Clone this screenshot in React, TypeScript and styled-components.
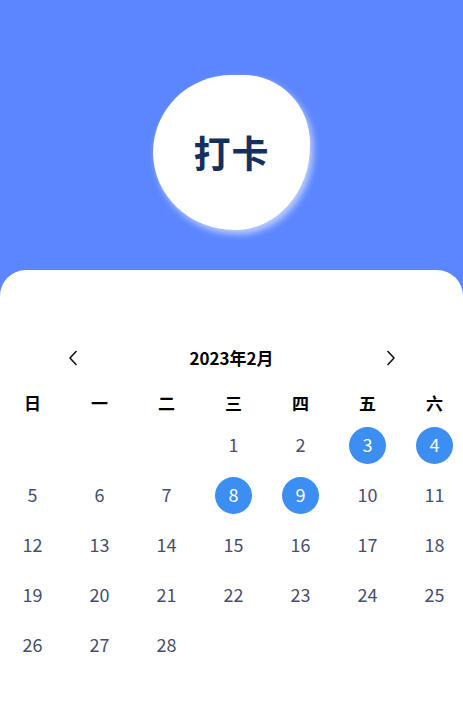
import React from "react";
import styled, { createGlobalStyle } from "styled-components";

const Global = createGlobalStyle`
  html, body { margin: 0; padding: 0; background: #ffffff; }
  body { font-family: "Noto Sans CJK SC", "Noto Sans", sans-serif; }
  * { box-sizing: border-box; }
`;

const Page = styled.div`
  width: 463px;
  min-height: 719px;
  background: #5b86ff;
  display: flex;
  flex-direction: column;
  overflow: hidden;
`;

const Header = styled.header`
  height: 270px;
  padding-top: 34px;
  display: flex;
  align-items: center;
  justify-content: center;
`;

const Blob = styled.button`
  width: 157px;
  height: 155px;
  border: none;
  background: #ffffff;
  border-radius: 50% 42% 48% 52% / 50% 44% 54% 50%;
  box-shadow: 3px 4px 7px rgba(210, 222, 255, 0.85);
  display: flex;
  align-items: center;
  justify-content: center;
  font-family: "Noto Sans CJK SC", sans-serif;
  font-size: 37px;
  font-weight: 700;
  color: #14305e;
  letter-spacing: 1px;
  padding: 0;
`;

const Panel = styled.main`
  flex: 1;
  background: #ffffff;
  border-radius: 26px 26px 0 0;
  padding-top: 75px;
  display: flex;
  flex-direction: column;
`;

const Nav = styled.div`
  width: 338px;
  height: 26px;
  margin: 0 auto;
  display: flex;
  align-items: center;
  justify-content: space-between;
`;

const Arrow = styled.span`
  width: 20px;
  height: 26px;
  display: flex;
  align-items: center;
  justify-content: center;
  color: #111;
`;

const Title = styled.div`
  font-size: 17px;
  font-weight: 700;
  color: #000;
  line-height: 26px;
`;

const Grid = styled.div`
  display: grid;
  grid-template-columns: repeat(7, 67px);
  margin-left: -1px;
  margin-top: 13px;
`;

const WeekCell = styled.div`
  height: 36px;
  display: flex;
  align-items: center;
  justify-content: center;
  font-size: 17px;
  font-weight: 700;
  color: #000;
`;

const DayCell = styled.div`
  height: 50px;
  display: flex;
  align-items: center;
  justify-content: center;
`;

const Day = styled.span<{ $on?: boolean }>`
  width: 37px;
  height: 37px;
  border-radius: 50%;
  display: flex;
  align-items: center;
  justify-content: center;
  font-size: 18px;
  font-weight: 400;
  line-height: 1;
  padding-bottom: 2px;
  color: ${(p) => (p.$on ? "#ffffff" : "#4a4d6c")};
  background: ${(p) => (p.$on ? "#3d8ef2" : "transparent")};
`;

const Chevron = ({ dir }: { dir: "l" | "r" }) => (
  <svg width="10" height="16" viewBox="0 0 10 16" fill="none">
    <path
      d={dir === "l" ? "M8 1.5 L2 8 L8 14.5" : "M2 1.5 L8 8 L2 14.5"}
      stroke="#111"
      strokeWidth="1.6"
      strokeLinecap="round"
      strokeLinejoin="round"
    />
  </svg>
);

const weeks = ["日", "一", "二", "三", "四", "五", "六"];
const checked = new Set([3, 4, 8, 9]);

export default function App() {
  const cells: (number | null)[] = [null, null, null];
  for (let d = 1; d <= 28; d++) cells.push(d);
  return (
    <>
      <Global />
      <Page>
        <Header>
          <Blob>打卡</Blob>
        </Header>
        <Panel>
          <Nav>
            <Arrow>
              <Chevron dir="l" />
            </Arrow>
            <Title>2023年2月</Title>
            <Arrow>
              <Chevron dir="r" />
            </Arrow>
          </Nav>
          <Grid>
            {weeks.map((w) => (
              <WeekCell key={w}>{w}</WeekCell>
            ))}
            {cells.map((d, i) => (
              <DayCell key={i}>
                {d !== null && <Day $on={checked.has(d)}>{d}</Day>}
              </DayCell>
            ))}
          </Grid>
        </Panel>
      </Page>
    </>
  );
}
